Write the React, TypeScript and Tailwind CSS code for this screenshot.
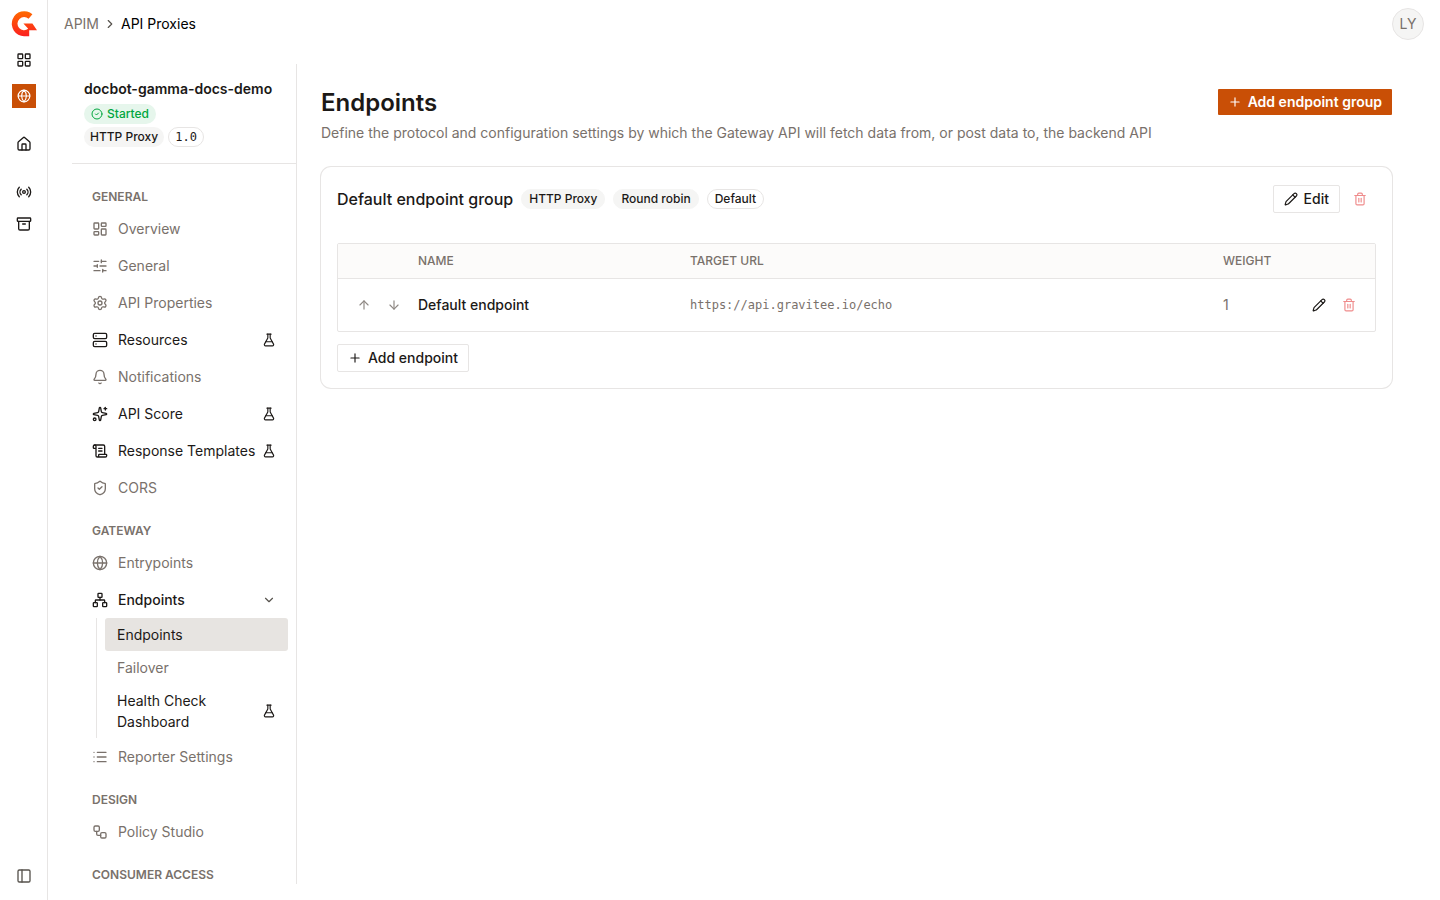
import type { ReactNode } from 'react'
import {
  Archive, ArrowDown, ArrowUp, Bell, ChevronDown, ChevronRight, CircleCheck, FlaskConical, Globe, House,
  LayoutDashboard, LayoutGrid, List, Network, PanelLeft, Pencil, Plus, Radio, ScrollText, Server, Settings,
  ShieldCheck, SlidersHorizontal, Sparkles, Trash2, Workflow, type LucideIcon,
} from 'lucide-react'

interface NavEntry {
  label: string
  icon: LucideIcon
  strong?: boolean
  lab?: boolean
}

const general: NavEntry[] = [
  { label: 'Overview', icon: LayoutDashboard },
  { label: 'General', icon: SlidersHorizontal },
  { label: 'API Properties', icon: Settings },
  { label: 'Resources', icon: Server, strong: true, lab: true },
  { label: 'Notifications', icon: Bell },
  { label: 'API Score', icon: Sparkles, strong: true, lab: true },
  { label: 'Response Templates', icon: ScrollText, strong: true, lab: true },
  { label: 'CORS', icon: ShieldCheck },
]

function Logo() {
  return (
    <svg viewBox="0 0 26 26" className="size-[26px]" aria-hidden="true">
      <defs>
        <linearGradient id="logo-fill" x1="0" y1="0" x2="0" y2="1">
          <stop offset="0" stopColor="#ff6a00" />
          <stop offset="1" stopColor="#fb2020" />
        </linearGradient>
      </defs>
      <path fill="url(#logo-fill)" d="M21.4 3.2A12.5 12.5 0 1 0 13 25.2h5.2v-6H26l-4.6-6.8h-9l4.8 5.4A6.6 6.6 0 1 1 17.6 7.8z" />
    </svg>
  )
}

function NavLink({ label, icon: Icon, strong, lab }: NavEntry) {
  return (
    <a href="#" className={`flex items-center gap-2.5 rounded px-3 py-2 ${strong ? 'text-[#1c1917]' : 'text-[#79716b]'}`}>
      <Icon className="size-4 shrink-0" />
      <span className="min-w-0 flex-1 whitespace-nowrap">{label}</span>
      {lab && <FlaskConical className="size-3.5 shrink-0" />}
    </a>
  )
}

function SectionLabel({ children }: { children: ReactNode }) {
  return <h2 className="px-3 pt-4 pb-1 text-xs leading-[18px] font-semibold text-[#79716b] uppercase">{children}</h2>
}

function Badge({ children, outline }: { children: ReactNode; outline?: boolean }) {
  return (
    <span className={`flex h-5 items-center rounded-full border px-[7px] text-xs font-medium whitespace-nowrap ${outline ? 'border-[#e7e5e4]' : 'border-[#f5f5f4] bg-[#f5f5f4]'}`}>
      {children}
    </span>
  )
}

function IconButton({ label, icon: Icon, className = 'size-7' }: { label: string; icon: LucideIcon; className?: string }) {
  return (
    <button type="button" aria-label={label} className={`flex items-center justify-center ${className}`}>
      <Icon className="size-3.5" />
    </button>
  )
}

function Rail() {
  return (
    <nav aria-label="Modules" className="flex w-12 shrink-0 flex-col items-center border-r border-[#e7e5e4] pt-3 pb-3">
      <a href="#" aria-label="Home page" className="flex h-6 items-center"><Logo /></a>
      <a href="#" aria-label="Dashboard" className="mt-3 flex size-6 items-center justify-center"><LayoutGrid className="size-4" /></a>
      <a href="#" aria-label="API management" className="mt-3 flex size-6 items-center justify-center bg-[#c94f06] text-white"><Globe className="size-3.5" /></a>
      <a href="#" aria-label="Home" className="mt-6 flex size-6 items-center justify-center"><House className="size-4" /></a>
      <a href="#" aria-label="API proxies" className="mt-6 flex size-6 items-center justify-center"><Radio className="size-4" /></a>
      <a href="#" aria-label="Archive" className="mt-2 flex size-6 items-center justify-center"><Archive className="size-4" /></a>
      <button type="button" aria-label="Toggle sidebar" className="mt-auto flex size-6 items-center justify-center text-[#57534d]"><PanelLeft className="size-4" /></button>
    </nav>
  )
}

function Sidebar() {
  return (
    <aside className="flex w-[225px] shrink-0 flex-col overflow-hidden border-r border-[#e7e5e4]">
      <div className="border-b border-[#e7e5e4] px-3 pt-4 pb-4">
        <div className="text-sm leading-[18px] font-semibold whitespace-nowrap">docbot-gamma-docs-demo</div>
        <div className="mt-1.5 flex">
          <span className="flex h-5 items-center gap-1 rounded-full bg-[#e6f6ec] px-[7px] text-xs font-medium text-[#00a63e]">
            <CircleCheck className="size-3" />Started
          </span>
        </div>
        <div className="mt-[3px] flex gap-1">
          <span className="flex h-5 items-center rounded-full bg-[#f5f5f4] px-1.5 text-xs font-medium">HTTP Proxy</span>
          <span className="flex h-5 items-center rounded-full border border-[#e7e5e4] px-1.5 font-['DejaVu_Sans_Mono',monospace] text-xs">1.0</span>
        </div>
      </div>
      <nav aria-label="API" className="min-h-0 flex-1 overflow-hidden p-2 text-sm leading-[21px]">
        <SectionLabel>General</SectionLabel>
        {general.map((item) => <NavLink key={item.label} {...item} />)}
        <SectionLabel>Gateway</SectionLabel>
        <NavLink label="Entrypoints" icon={Globe} />
        <button type="button" aria-expanded="true" className="flex w-full items-center gap-2.5 px-3 py-2 text-left font-medium">
          <Network className="size-4 shrink-0" />
          <span className="flex-1">Endpoints</span>
          <ChevronDown className="size-3.5 text-[#57534d]" />
        </button>
        <div className="ml-4 border-l border-[#e7e5e4] pl-2">
          <a href="#" aria-current="page" className="block rounded-[3px] bg-[#e7e4e1] px-3 py-1.5">Endpoints</a>
          <a href="#" className="block px-3 py-1.5 text-[#79716b]">Failover</a>
          <a href="#" className="flex items-center justify-between px-3 py-1.5">
            <span className="w-28">Health Check Dashboard</span>
            <FlaskConical className="size-3.5" />
          </a>
        </div>
        <NavLink label="Reporter Settings" icon={List} />
        <SectionLabel>Design</SectionLabel>
        <NavLink label="Policy Studio" icon={Workflow} />
        <SectionLabel>Consumer Access</SectionLabel>
      </nav>
    </aside>
  )
}

function EndpointTable() {
  return (
    <div className="mt-7 overflow-hidden rounded-xs border border-[#e7e5e4]">
      <table className="w-full table-fixed text-left">
        <thead className="border-b border-[#e7e5e4] bg-[#fcfbfa] text-xs text-[#79716b]">
          <tr className="h-[34px]">
            <th aria-label="Order" className="w-20" />
            <th className="w-[272px] font-medium">NAME</th>
            <th className="font-medium">TARGET URL</th>
            <th className="w-[82px] font-medium">WEIGHT</th>
            <th aria-label="Actions" className="w-[70px]" />
          </tr>
        </thead>
        <tbody>
          <tr className="h-[53px]">
            <td>
              <div className="flex gap-0.5 pl-3 text-[#8f8984]">
                <IconButton label="Move up" icon={ArrowUp} />
                <IconButton label="Move down" icon={ArrowDown} />
              </div>
            </td>
            <td className="text-sm font-medium">Default endpoint</td>
            <td className="font-['DejaVu_Sans_Mono',monospace] text-xs text-[#79716b]">https://api.gravitee.io/echo</td>
            <td className="text-sm text-[#79716b]">1</td>
            <td>
              <div className="flex gap-0.5">
                <IconButton label="Edit endpoint" icon={Pencil} />
                <IconButton label="Delete endpoint" icon={Trash2} className="size-7 text-[#ef8b8b]" />
              </div>
            </td>
          </tr>
        </tbody>
      </table>
    </div>
  )
}

export default function App() {
  return (
    <div className="flex h-screen bg-white font-[Inter,sans-serif] text-[#1c1917]">
      <Rail />
      <div className="flex min-w-0 flex-1 flex-col">
        <header className="flex h-12 shrink-0 items-center justify-between px-4">
          <nav aria-label="Breadcrumb" className="flex items-center gap-1 text-sm">
            <a href="#" className="text-[#79716b]">APIM</a>
            <ChevronRight className="size-3.5 text-[#57534d]" />
            <span aria-current="page" className="text-black">API Proxies</span>
          </nav>
          <button type="button" aria-label="Account" className="flex size-8 items-center justify-center rounded-full border border-[#e7e5e4] bg-[#f5f5f4] text-sm text-[#79716b]">LY</button>
        </header>
        <div className="flex min-h-0 flex-1 px-6 py-4">
          <Sidebar />
          <main className="min-w-0 flex-1 p-6">
            <div className="flex items-start justify-between">
              <div>
                <h1 className="text-2xl leading-[30px] font-semibold">Endpoints</h1>
                <p className="mt-1 text-sm leading-[21px] text-[#79716b]">Define the protocol and configuration settings by which the Gateway API will fetch data from, or post data to, the backend API</p>
              </div>
              <button type="button" className="mt-px flex h-[26px] items-center gap-1.5 rounded-[1px] bg-[#c94f06] px-2.5 text-sm font-semibold whitespace-nowrap text-white">
                <Plus className="size-3.5" />Add endpoint group
              </button>
            </div>
            <section className="mt-6 rounded-[10px] p-4 ring-1 ring-[#e7e5e4]">
              <div className="flex h-8 items-center gap-2">
                <h2 className="text-base font-medium">Default endpoint group</h2>
                <Badge>HTTP Proxy</Badge>
                <Badge>Round robin</Badge>
                <Badge outline>Default</Badge>
                <div className="ml-auto flex items-center gap-1">
                  <button type="button" className="flex h-7 items-center gap-1.5 rounded-xs border border-[#e7e5e4] px-2.5 text-sm font-medium">
                    <Pencil className="size-3.5" />Edit
                  </button>
                  <IconButton label="Delete endpoint group" icon={Trash2} className="size-8 text-[#ef8b8b]" />
                </div>
              </div>
              <EndpointTable />
              <button type="button" className="mt-3 flex h-7 items-center gap-1.5 rounded-xs border border-[#e7e5e4] px-2.5 text-sm font-medium">
                <Plus className="size-3.5" />Add endpoint
              </button>
            </section>
          </main>
        </div>
      </div>
    </div>
  )
}
